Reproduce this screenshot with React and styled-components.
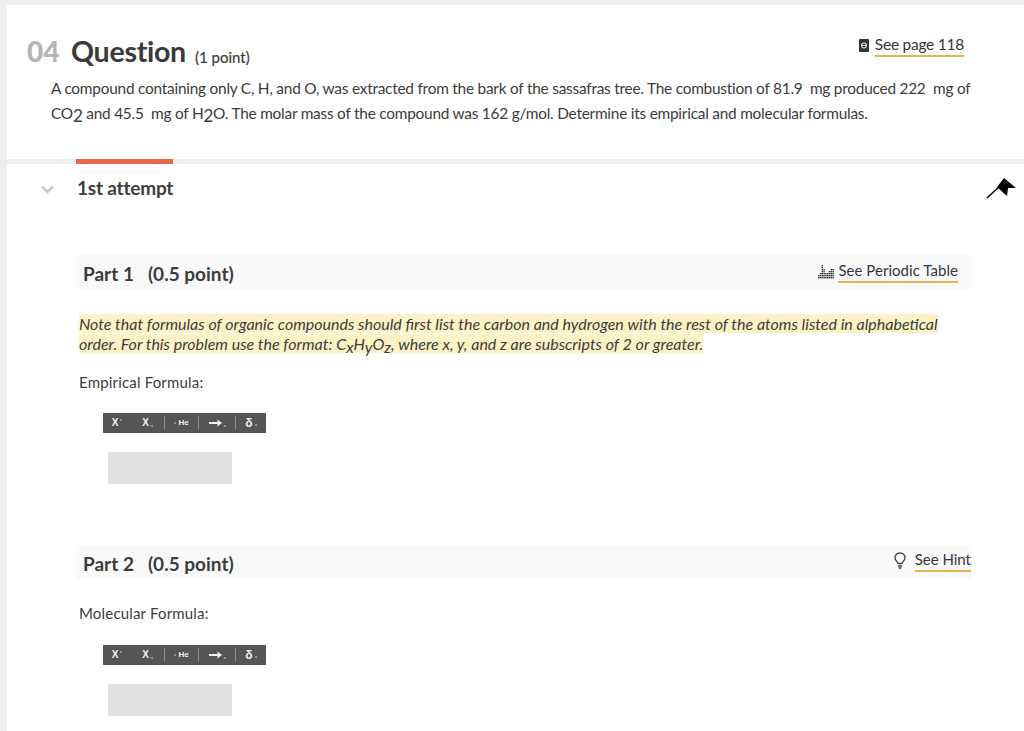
import React from 'react'
import styled, { createGlobalStyle } from 'styled-components'

const GlobalStyle = createGlobalStyle`
  html, body {
    margin: 0;
    padding: 0;
    background-color: #eeeeee;
    font-family: Lato, "Open Sans", sans-serif;
    color: #3c3c3c;
  }
`

const Page = styled.div`
  height: 731px;
  overflow: hidden;
  box-sizing: border-box;
  padding: 5px 0 0 7px;
  display: flex;
  flex-direction: column;
`

const QuestionPanel = styled.section`
  height: 154px;
  box-sizing: border-box;
  background-color: #fff;
  padding: 29px 60px 0 20px;
  flex-shrink: 0;
`

const QuestionHead = styled.div`
  display: flex;
  align-items: flex-start;
  height: 42px;
`

const Number = styled.span`
  font-size: 28px;
  font-weight: 900;
  line-height: 34px;
  width: 44px;
  color: #b5b5b5;
`

const Title = styled.h1`
  margin: 0;
  font-size: 28.6px;
  line-height: 34px;
  font-weight: 700;
  color: #3a3a3a;
  letter-spacing: -0.3px;
`

const Points = styled.span`
  font-size: 15px;
  font-weight: 400;
  line-height: 20px;
  margin: 13px 0 0 9px;
  -webkit-text-stroke: 0.2px #3c3c3c;
`

const Ref = styled.a`
  display: flex;
  align-items: center;
  gap: ${(p) => p.$gap || 4}px;
  margin-left: auto;
  font-size: 15.5px;
  color: #33373d;
`

const RefLabel = styled.span`
  display: inline-block;
  line-height: 20px;
  padding-bottom: 1px;
  border-bottom: 2px solid #e0b850;
  letter-spacing: ${(p) => p.$spacing || 0}px;
`

const PageRef = styled(Ref)`
  margin-top: -1px;
  height: 24px;
  gap: 6px;
`

const QuestionText = styled.p`
  margin: 0 0 0 24px;
  width: 925px;
  font-size: 15.4px;
  line-height: 25px;
  color: #3c3c3c;
  letter-spacing: -0.23px;
`

const Sub = styled.span`
  font-size: 17px;
  position: relative;
  top: 3px;
  line-height: 0;
`

const TabGap = styled.div`
  height: 5px;
  flex-shrink: 0;
`

const ActiveTab = styled.div`
  width: 97px;
  height: 5px;
  margin-left: 69px;
  background-color: #e9654b;
`

const AttemptPanel = styled.section`
  flex: 1;
  background-color: #fff;
  padding: 0 52px 0 69px;
  position: relative;
`

const AttemptHead = styled.div`
  height: 47px;
  display: flex;
  align-items: center;
  font-size: 19px;
  font-weight: 700;
  color: #3c3c3c;
  letter-spacing: -0.2px;
  padding-left: 1px;
  margin-bottom: 44px;
`

const Chevron = styled.svg`
  position: absolute;
  left: 34px;
  top: 21px;
`

const Pin = styled.svg`
  position: absolute;
  right: 8px;
  top: 12px;
`

const PartBar = styled.div`
  height: 34px;
  background-color: #f9f9f9;
  display: flex;
  align-items: center;
  padding-left: 7px;
`

const PartTitle = styled.h2`
  margin: 2px 0 0;
  font-size: 19px;
  font-weight: 700;
  color: #3c3c3c;
`

const PartPoints = styled.span`
  margin-left: 14px;
`

const PartRef = styled(Ref)`
  margin-top: -2px;
  font-size: 15px;
`

const PeriodicRef = styled(PartRef)`
  margin-right: 14px;
`

const HintRef = styled(PartRef)`
  margin-top: -3px;
  margin-right: 1px;
`

const Note = styled.p`
  margin: 25px 0 0 3px;
  width: 860px;
  font-size: 16px;
  line-height: 20px;
  font-style: italic;
  color: #3c3c3c;
`

const Mark = styled.mark`
  background-color: #fdf2c6;
  color: inherit;
`

const NoteSub = styled.span`
  font-size: 16px;
  position: relative;
  top: 3px;
  line-height: 0;
`

const Label = styled.div`
  margin: ${(p) => p.$top}px 0 0 3px;
  font-size: 15px;
  line-height: 20px;
  letter-spacing: 0.18px;
  color: #3c3c3c;
`

const Toolbar = styled.div`
  margin: ${(p) => p.$top}px 0 0 27px;
  width: 163px;
  height: 20px;
  background-color: #555555;
  display: flex;
  align-items: center;
  font-family: "Liberation Sans", Arial, sans-serif;
  font-weight: 700;
  color: #f2f2f2;
`

const ToolKey = styled.span`
  width: ${(p) => p.$w}px;
  display: flex;
  justify-content: center;
  align-items: center;
  gap: 2px;
  font-size: ${(p) => p.$size || 10}px;
  line-height: 20px;
`

const Tiny = styled.span`
  width: 2px;
  height: 2px;
  background-color: #8f8f8f;
  transform: translateY(${(p) => p.$dy || 0}px);
`

const Divider = styled.span`
  width: 1px;
  height: 14px;
  background-color: #8d8d8d;
`

const Answer = styled.div`
  margin: 19px 0 0 32px;
  width: 124px;
  height: 32px;
  background-color: #e2e2e2;
`

const PartTwoGap = styled.div`
  height: ${(p) => p.$h}px;
`

function PeriodicIcon() {
  const cols = [2, 3, 7, 5, 3, 3, 4, 5, 5]
  return (
    <svg width="16" height="15" viewBox="0 0 16 15">
      {cols.map((n, x) =>
        Array.from({ length: n }).map((_, y) => (
          <rect key={`${x}-${y}`} x={x * 1.8} y={13 - y * 2} width="1.4" height="1.4" fill="#333" />
        ))
      )}
    </svg>
  )
}

function BookIcon() {
  return (
    <svg width="10" height="13" viewBox="0 0 10 13">
      <rect width="10" height="13" rx="1" fill="#333" />
      <circle cx="5" cy="6.5" r="2.5" fill="none" stroke="#ddd" strokeWidth="1.1" />
      <rect x="2.6" y="6" width="4.8" height="1" fill="#ddd" />
    </svg>
  )
}

function BulbIcon() {
  return (
    <svg width="12" height="17" viewBox="0 0 12 17" fill="none" stroke="#444" strokeWidth="1.4">
      <path d="M4 11.5C3.6 9.6 1 8.6 1 5.8 1 3 3.2 1 6 1s5 2 5 4.8c0 2.8-2.6 3.8-3 5.7z" />
      <path d="M4.5 14h3M5.2 16h1.6" strokeLinecap="round" />
    </svg>
  )
}

function ArrowIcon() {
  return (
    <svg width="13" height="8" viewBox="0 0 13 8">
      <path d="M0 3h8.5V0.5L13 4 8.5 7.500V5H0z" fill="#f2f2f2" />
    </svg>
  )
}

function FormulaToolbar({ top }) {
  return (
    <Toolbar $top={top}>
      <ToolKey $w={28}>X<Tiny $dy={-3} /></ToolKey>
      <ToolKey $w={33}>X<Tiny $dy={3} /></ToolKey>
      <Divider />
      <ToolKey $w={33} $size={8}><Tiny />He</ToolKey>
      <Divider />
      <ToolKey $w={36}><ArrowIcon /><Tiny $dy={3} /></ToolKey>
      <Divider />
      <ToolKey $w={30} $size={12}>δ<Tiny $dy={2} /></ToolKey>
    </Toolbar>
  )
}

export default function App() {
  return (
    <>
      <GlobalStyle />
      <Page>
        <QuestionPanel>
          <QuestionHead>
            <Number>04</Number>
            <Title>Question</Title>
            <Points>(1 point)</Points>
            <PageRef>
              <BookIcon />
              <RefLabel $spacing={-0.25}>See page 118</RefLabel>
            </PageRef>
          </QuestionHead>
          <QuestionText>
            A compound containing only C, H, and O, was extracted from the bark of the sassafras tree. The combustion of 81.9&nbsp; mg produced 222&nbsp; mg of CO<Sub>2</Sub> and 45.5&nbsp; mg of H<Sub>2</Sub>O. The molar mass of the compound was 162 g/mol. Determine its empirical and molecular formulas.
          </QuestionText>
        </QuestionPanel>
        <TabGap>
          <ActiveTab />
        </TabGap>
        <AttemptPanel>
          <Chevron width="13" height="9" viewBox="0 0 13 9" fill="none" stroke="#c8c8c8" strokeWidth="2.6">
            <path d="M1 1.5l5.5 5.5L12 1.5" />
          </Chevron>
          <Pin width="30" height="24" viewBox="0 0 30 24">
            <path d="M1 22L14 10" stroke="#000" strokeWidth="1.6" fill="none" />
            <path d="M11 11L18 2l12 10h-8l-1 8z" fill="#000" />
          </Pin>
          <AttemptHead>1st attempt</AttemptHead>
          <PartBar>
            <PartTitle>Part 1<PartPoints>(0.5 point)</PartPoints></PartTitle>
            <PeriodicRef $gap={4}>
              <PeriodicIcon />
              <RefLabel $spacing={0.04}>See Periodic Table</RefLabel>
            </PeriodicRef>
          </PartBar>
          <Note>
            <Mark>
              Note that formulas of organic compounds should first list the carbon and hydrogen with the rest of the atoms listed in alphabetical order. For this problem use the format: C<NoteSub>x</NoteSub>H<NoteSub>y</NoteSub>O<NoteSub>z</NoteSub>, where x, y, and z are subscripts of 2 or greater.
            </Mark>
          </Note>
          <Label $top={18}>Empirical Formula:</Label>
          <FormulaToolbar top={21} />
          <Answer />
          <PartTwoGap $h={61} />
          <PartBar>
            <PartTitle>Part 2<PartPoints>(0.5 point)</PartPoints></PartTitle>
            <HintRef $gap={9}>
              <BulbIcon />
              <RefLabel>See Hint</RefLabel>
            </HintRef>
          </PartBar>
          <Label $top={24}>Molecular Formula:</Label>
          <FormulaToolbar top={22} />
          <Answer />
        </AttemptPanel>
      </Page>
    </>
  )
}
